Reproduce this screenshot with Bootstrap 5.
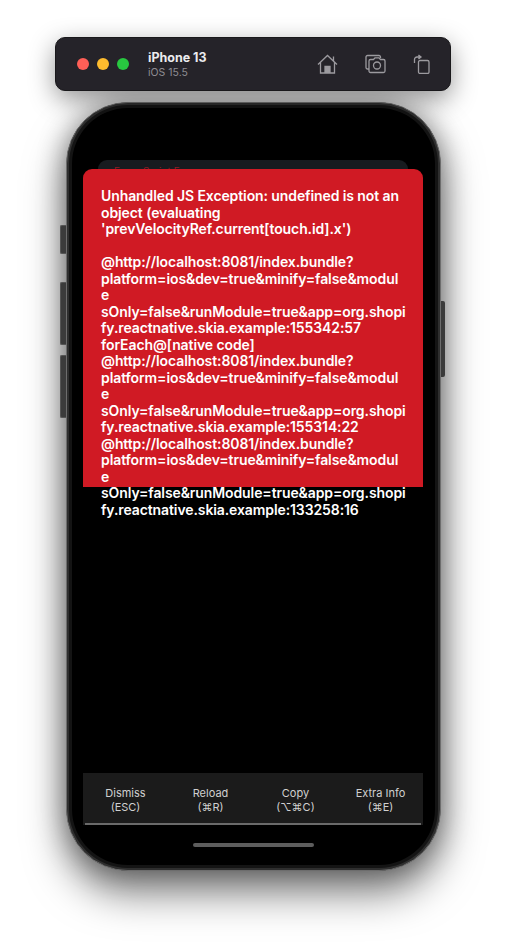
<!DOCTYPE html>
<html lang="en">
<head>
<meta charset="utf-8">
<title>iPhone 13 simulator</title>
<link href="https://cdn.jsdelivr.net/npm/bootstrap@5.3.0/dist/css/bootstrap.min.css" rel="stylesheet">
<style>
html, body { height: 948px; overflow: hidden; background: #fff; }
body { font-family: Inter, "Liberation Sans", sans-serif; padding-top: 37px; }
.sim-bar { width: 396px; height: 54px; margin-left: 55px; background: #252329; border: 1px solid #19181b; border-radius: 10px; padding: 0 21px; box-shadow: 0 8px 26px rgba(0,0,0,.42); position: relative; z-index: 2; }
.dot { width: 12px; height: 12px; border-radius: 50%; }
.dot-r { background: #ff5f57; } .dot-y { background: #febc2e; } .dot-g { background: #28c840; }
.sim-title { margin-left: 19px; line-height: 1; }
.sim-name { font-size: 12.5px; font-weight: 700; color: #ececee; line-height: 15px; }
.sim-os { font-size: 10.5px; color: #8f8d93; line-height: 13px; margin-top: 1px; }
.sim-icons { gap: 27px; margin-right: -1px; }
.sim-icons svg { fill: none; stroke: #9c9a9f; stroke-width: 1.3; display: block; }
.phone { width: 375px; height: 769px; margin: 11px 0 0 66px; background: #000; border-radius: 62px; border: 1px solid #6d6d6d; box-shadow: 0 0 0 0 #000, inset 0 0 0 2px #2e2e2e, inset 0 0 0 5px #141414, 0 22px 40px rgba(0,0,0,.5), 0 0 28px rgba(0,0,0,.38); position: relative; padding: 66px 17px 0 16px; }
.side-btn { position: absolute; left: -7px; width: 6px; background: #3b3b3b; border: 1px solid #555; border-right: 0; border-radius: 2px 0 0 2px; }
.side-a { top: 122px; height: 29px; } .side-b { top: 179px; height: 63px; } .side-c { top: 252px; height: 63px; }
.side-d { position: absolute; right: -5px; top: 198px; width: 4px; height: 76px; background: #3b3b3b; border-radius: 0 2px 2px 0; }
.back-card { position: absolute; left: 31px; right: 32px; top: 57px; height: 40px; background: #171b1f; border-radius: 9px; color: #8e1b24; font-size: 10px; padding: 4px 16px; overflow: hidden; white-space: nowrap; }
.err-box { position: relative; height: 318px; background: #d01a24; border-radius: 9px 9px 0 0; color: #fff; font-size: 14px; font-weight: 600; line-height: 16.5px; padding: 19px 17px 0 18px; word-break: break-all; letter-spacing: -.1px; }
.err-word { word-break: normal; }
.action-bar { position: absolute; left: 16px; right: 17px; top: 670px; height: 52px; background: #1b1b1b; color: #d0d0d0; font-size: 11px; line-height: 13.5px; text-align: center; padding-top: 14px; }
.action-bar::after { content: ""; position: absolute; left: 2px; right: 2px; bottom: 0; height: 2px; background: #6a6a6a; }
.home-pill { position: absolute; left: 126px; top: 740px; width: 121px; height: 4px; border-radius: 2px; background: #5d5d5d; }
</style>
</head>
<body>
<div class="sim-bar d-flex align-items-center">
  <div class="d-flex gap-2"><span class="dot dot-r"></span><span class="dot dot-y"></span><span class="dot dot-g"></span></div>
  <div class="sim-title"><div class="sim-name">iPhone 13</div><div class="sim-os">iOS 15.5</div></div>
  <div class="sim-icons d-flex align-items-center ms-auto">
    <svg width="21" height="20" viewBox="0 0 21 20" aria-hidden="true"><path d="M1 10.5 10.5 1.5 20 10.5M3.5 8.5V19H17.5V8.5M16.5 6.8V2.5"/><path d="M8 19V12.5H13V19" fill="#9c9a9f"/></svg>
    <svg width="21" height="20" viewBox="0 0 21 20" aria-hidden="true"><path d="M4 15H2.5A1.5 1.5 0 0 1 1 13.500V3A1.500 1.500 0 0 1 2.500 1.500H14A1.500 1.500 0 0 1 15.500 3V4"/><path d="M5.500 5.500H8.500L10 3.800H14L15.500 5.500H18.500A1.500 1.500 0 0 1 20 7V17A1.500 1.500 0 0 1 18.500 18.500H5.500A1.500 1.500 0 0 1 4 17V7A1.500 1.500 0 0 1 5.500 5.500Z"/><circle cx="12" cy="11.500" r="3.500"/></svg>
    <svg width="17" height="20" viewBox="0 0 17 20" aria-hidden="true"><rect x="5.500" y="6.500" width="10.500" height="13" rx="1.500"/><path d="M1.500 9V5.500A2.500 2.500 0 0 1 4 3H7.500"/><path d="M5.500 1 8 3 5.500 5" fill="#9c9a9f"/></svg>
  </div>
</div>
<div class="phone">
  <span class="side-btn side-a"></span><span class="side-btn side-b"></span><span class="side-btn side-c"></span><span class="side-d"></span>
  <div class="back-card">Error: Script Error</div>
  <div class="err-box"><span class="err-word">Unhandled JS Exception: undefined is not an object (evaluating</span><br><span class="err-word">'prevVelocityRef.current[touch.id].x')</span><br><br>@http://localhost:8081/index.bundle?<br>platform=ios&amp;dev=true&amp;minify=false&amp;module<br>sOnly=false&amp;runModule=true&amp;app=org.shopi<br>fy.reactnative.skia.example:155342:57<br>forEach@[native code]<br>@http://localhost:8081/index.bundle?<br>platform=ios&amp;dev=true&amp;minify=false&amp;module<br>sOnly=false&amp;runModule=true&amp;app=org.shopi<br>fy.reactnative.skia.example:155314:22<br>@http://localhost:8081/index.bundle?<br>platform=ios&amp;dev=true&amp;minify=false&amp;module<br>sOnly=false&amp;runModule=true&amp;app=org.shopi<br>fy.reactnative.skia.example:133258:16</div>
  <div class="action-bar row g-0">
    <div class="col-3">Dismiss<br>(ESC)</div>
    <div class="col-3">Reload<br>(⌘R)</div>
    <div class="col-3">Copy<br>(⌥⌘C)</div>
    <div class="col-3">Extra Info<br>(⌘E)</div>
  </div>
  <div class="home-pill"></div>
</div>
<script src="https://cdn.jsdelivr.net/npm/bootstrap@5.3.0/dist/js/bootstrap.bundle.min.js"></script>
</body>
</html>
